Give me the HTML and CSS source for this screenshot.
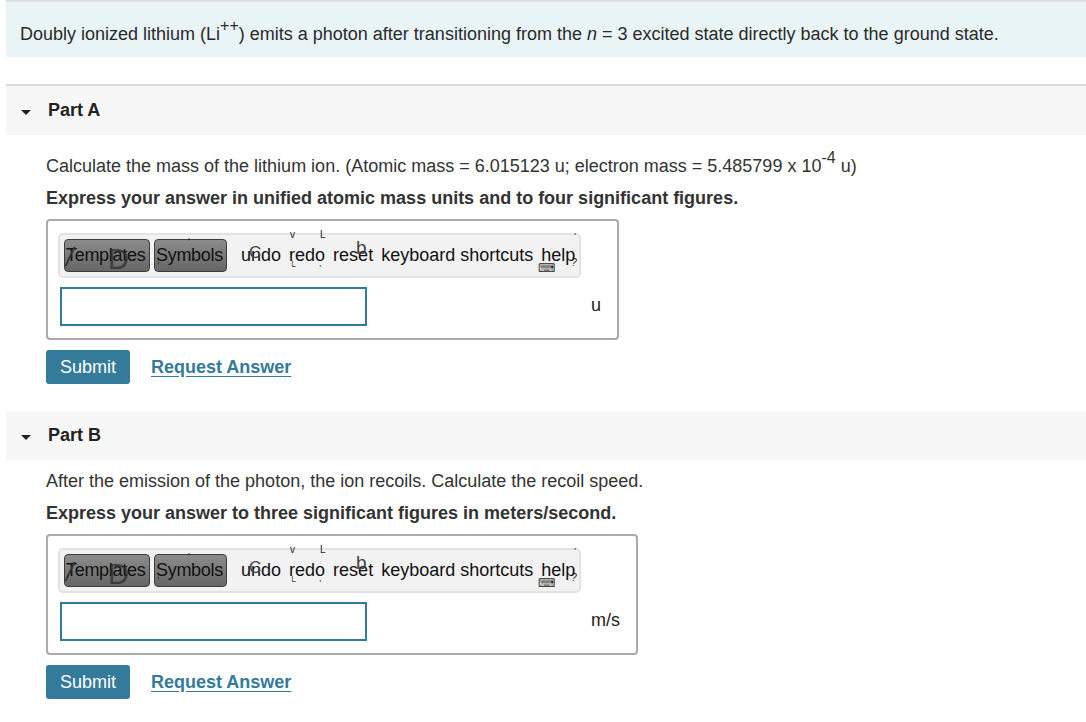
FILE: index.html
```html
<!DOCTYPE html>
<html>
<head>
<meta charset="utf-8">
<link rel="stylesheet" href="styles.css">
</head>
<body>
<div class="page">
  <div class="intro">
    <p>Doubly ionized lithium (Li<sup>++</sup>) emits a photon after transitioning from the <i>n</i> = 3 excited state directly back to the ground state.</p>
  </div>

  <section class="part part-a">
    <div class="part-head"><span class="caret"></span><span class="part-title">Part A</span></div>
    <div class="part-body">
      <p class="q">Calculate the mass of the lithium ion. (Atomic mass = 6.015123 u; electron mass = 5.485799 x 10<sup>-4</sup> u)</p>
      <p class="instr">Express your answer in unified atomic mass units and to four significant figures.</p>
      <div class="answer">
        <div class="answer-main">
          <div class="toolbar">
            <span class="tbtn tbtn-templates">Templates<span class="ov ov-slash">/</span><span class="ov ov-d">D</span></span>
            <span class="tbtn tbtn-symbols">Symbols<span class="ov ov-dot">'</span><span class="ov ov-dot2">,</span></span>
            <span class="titem ti-undo">u<span class="ovwrap">n<span class="ov ov-c">C</span></span>do</span>
            <span class="titem ti-redo">redo<span class="ov ov-v">v</span><span class="ov ov-l">L</span><span class="ov ov-u">&#x2514;</span><span class="ov ov-u2">,</span></span>
            <span class="titem ti-reset">res<span class="ovwrap">e<span class="ov ov-b">b</span></span>t</span>
            <span class="titem">keyboard shortcuts</span>
            <span class="titem ti-help">help<span class="ov ov-kb">&#x2328;</span><span class="ov ov-q">?</span><span class="ov ov-tick">'</span></span>
          </div>
          <div class="input"></div>
        </div>
        <div class="unit">u</div>
      </div>
      <div class="actions">
        <button class="submit">Submit</button>
        <a class="req" href="#">Request Answer</a>
      </div>
    </div>
  </section>

  <section class="part part-b">
    <div class="part-head"><span class="caret"></span><span class="part-title">Part B</span></div>
    <div class="part-body">
      <p class="q">After the emission of the photon, the ion recoils. Calculate the recoil speed.</p>
      <p class="instr">Express your answer to three significant figures in meters/second.</p>
      <div class="answer">
        <div class="answer-main">
          <div class="toolbar">
            <span class="tbtn tbtn-templates">Templates<span class="ov ov-slash">/</span><span class="ov ov-d">D</span></span>
            <span class="tbtn tbtn-symbols">Symbols<span class="ov ov-dot">'</span><span class="ov ov-dot2">,</span></span>
            <span class="titem ti-undo">u<span class="ovwrap">n<span class="ov ov-c">C</span></span>do</span>
            <span class="titem ti-redo">redo<span class="ov ov-v">v</span><span class="ov ov-l">L</span><span class="ov ov-u">&#x2514;</span><span class="ov ov-u2">,</span></span>
            <span class="titem ti-reset">res<span class="ovwrap">e<span class="ov ov-b">b</span></span>t</span>
            <span class="titem">keyboard shortcuts</span>
            <span class="titem ti-help">help<span class="ov ov-kb">&#x2328;</span><span class="ov ov-q">?</span><span class="ov ov-tick">'</span></span>
          </div>
          <div class="input"></div>
        </div>
        <div class="unit">m/s</div>
      </div>
      <div class="actions">
        <button class="submit">Submit</button>
        <a class="req" href="#">Request Answer</a>
      </div>
    </div>
  </section>
</div>
</body>
</html>
```

FILE: styles.css
```css
* { box-sizing: border-box; }
html, body { margin: 0; padding: 0; background: #fff; }
body {
  font-family: "Liberation Sans", Arial, Helvetica, sans-serif;
  font-size: 18px;
  color: #222;
}
.page { padding-left: 6px; }
p { margin: 0; }
sup { font-size: 16px; line-height: 0; vertical-align: 9px; }

.intro {
  border-top: 2px solid #dedfe0;
  background: #e9f4f6;
  height: 57px;
  padding: 0 14px;
  display: flex;
  align-items: center;
}
.intro p { line-height: 22px; padding-top: 9px; color: #2a2a2a; }

.part-a { margin-top: 27px; border-top: 2px solid #dcdcdc; }
.part-b { margin-top: 27px; }

.part-head {
  background: #f7f7f7;
  height: 49px;
  display: flex;
  align-items: center;
  padding-left: 15px;
}
.caret {
  width: 0; height: 0;
  border-left: 5px solid transparent;
  border-right: 5px solid transparent;
  border-top: 5px solid #222;
  margin-top: 4px;
}
.part-title { font-weight: bold; margin-left: 17px; color: #222; }

.part-body { padding-left: 40px; }
.part-a .part-body { padding-top: 20px; }
.part-b .part-body { padding-top: 10px; }

.q, .instr { line-height: 22px; }
.instr { font-weight: bold; margin-top: 10px; color: #333; }
.q { color: #333; }

.answer {
  display: inline-flex;
  margin-top: 10px;
  border: 2px solid #aaaaaa;
  border-radius: 4px;
  padding: 12px 16px 12px 10px;
}
.answer-main { display: flex; flex-direction: column; }
.unit {
  margin-left: 10px;
  align-self: flex-end;
  height: 39px;
  display: flex;
  align-items: center;
  color: #222;
  padding-bottom: 2px;
}

.toolbar {
  width: 523px;
  height: 45px;
  background: #f2f2f2;
  border: 2px solid #e2e2e2;
  border-radius: 5px;
  display: flex;
  align-items: center;
  padding-left: 4px;
  white-space: nowrap;
}
.tbtn {
  position: relative;
  height: 33px;
  display: flex;
  align-items: center;
  padding: 0 1px;
  background: linear-gradient(#8c8c8c, #666);
  border: 1px solid #3d3d3d;
  border-radius: 4px;
  color: #111;
  letter-spacing: -0.3px;
}
.tbtn-templates { width: 86px; }
.tbtn-symbols { width: 73px; margin-left: 4px; }
.titem { position: relative; color: #111; margin-left: 8px; }
.ti-undo { margin-left: 14px; }
.ovwrap { position: relative; }
.ov { position: absolute; color: #222; font-weight: normal; pointer-events: none; }
.ov-slash { left: 1px; top: 2px; font-size: 26px; font-style: italic; color: #333; }
.ov-d { left: 43px; top: 3px; font-size: 29px; color: #2a2a2a; opacity: 0.7; }
.ov-dot { left: 33px; top: -3px; font-size: 10px; }
.ov-dot2 { left: 2px; top: 14px; font-size: 10px; }
.ov-c { left: -2px; top: -2px; font-size: 17px; color: #444; }
.ov-v { left: 1px; top: -16px; font-size: 10px; }
.ov-l { left: 31px; top: -16px; font-size: 10px; }
.ov-u { left: 0; top: 16px; font-size: 9px; }
.ov-u2 { left: 30px; top: 13px; font-size: 9px; }
.ov-b { left: -2px; top: -8px; font-size: 19px; color: #444; }
.ov-kb { left: -3px; top: 16px; font-size: 12px; }
.ov-q { left: 30px; top: 12px; font-size: 10px; font-style: italic; }
.ov-tick { left: 33px; top: -14px; font-size: 9px; }
.ti-help { margin-left: 8px; }

.input {
  width: 307px;
  height: 39px;
  margin-top: 9px;
  margin-left: 2px;
  border: 2px solid #347a9a;
  background: #fff;
}

.actions {
  display: flex;
  align-items: center;
  margin-top: 10px;
}
.submit {
  font-family: inherit;
  font-size: 18px;
  width: 84px;
  height: 34px;
  background: #347a9a;
  color: #fff;
  border: none;
  border-radius: 3px;
  padding: 0;
}
.req {
  margin-left: 21px;
  color: #347a9a;
  font-weight: bold;
  text-decoration: underline;
  text-underline-offset: 3px;
}
```
